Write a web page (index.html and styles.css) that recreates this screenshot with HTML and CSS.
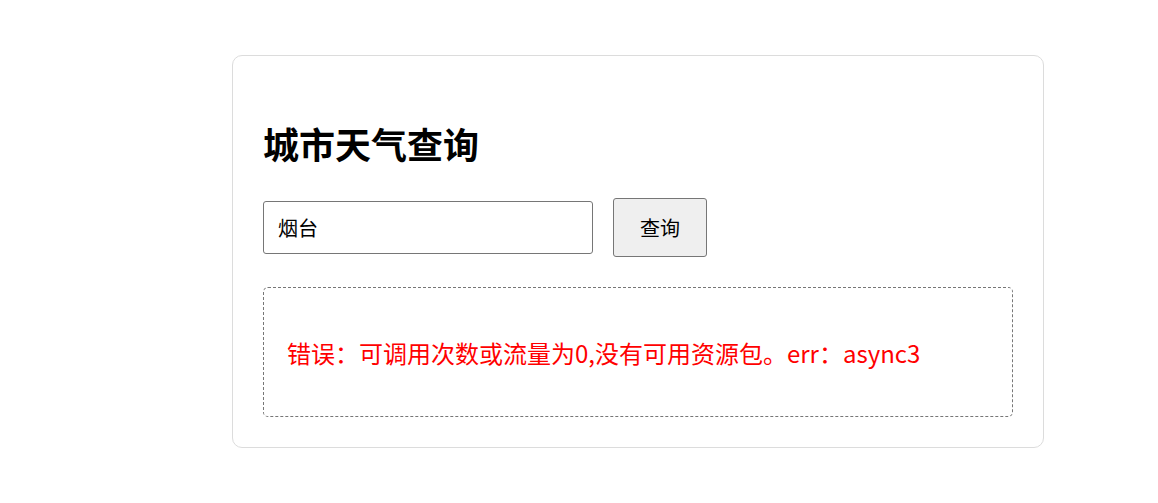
FILE: index.html
```html
<!DOCTYPE html>
<html lang="zh-CN">
<head>
	<meta charset="UTF-8">
	<title>城市天气查询</title>
	<link rel="stylesheet" href="styles.css">
</head>
<body>
	<div class="card">
		<h1 class="title">城市天气查询</h1>
		<div class="search">
			<input type="text" class="city" value="烟台">
			<button class="btn">查询</button>
		</div>
		<div class="result">
			<p class="err">错误：可调用次数或流量为0,没有可用资源包。err：async3</p>
		</div>
	</div>
</body>
</html>
```

FILE: styles.css
```css
body{margin: 0;background: #fff;font-family: "Noto Sans CJK SC","Noto Sans",sans-serif;color: #000;}
.card{width: 750px;margin: 55px 0 0 232px;padding: 30px;border: 1px solid #dcdcdc;border-radius: 10px;}
.title{font-size: 36px;line-height: 52px;font-weight: bold;margin: 31px 0 29px 0;}
.search{display: flex;align-items: center;gap: 20px;}
.city{box-sizing: border-box;width: 330px;height: 53px;padding: 0 14px;font-size: 20px;font-family: inherit;border: 1px solid #767676;border-radius: 3px;outline: none;color: #000;}
.btn{box-sizing: border-box;width: 94px;height: 59px;font-size: 20px;font-family: inherit;background: #efefef;border: 1px solid #767676;border-radius: 3px;color: #000;cursor: pointer;}
.result{box-sizing: border-box;margin-top: 30px;height: 130px;padding: 0 23px;border: 1px dashed #777;border-radius: 5px;display: flex;align-items: center;}
.err{margin: 0;font-size: 24px;line-height: 35px;color: #ff0000;}
```
